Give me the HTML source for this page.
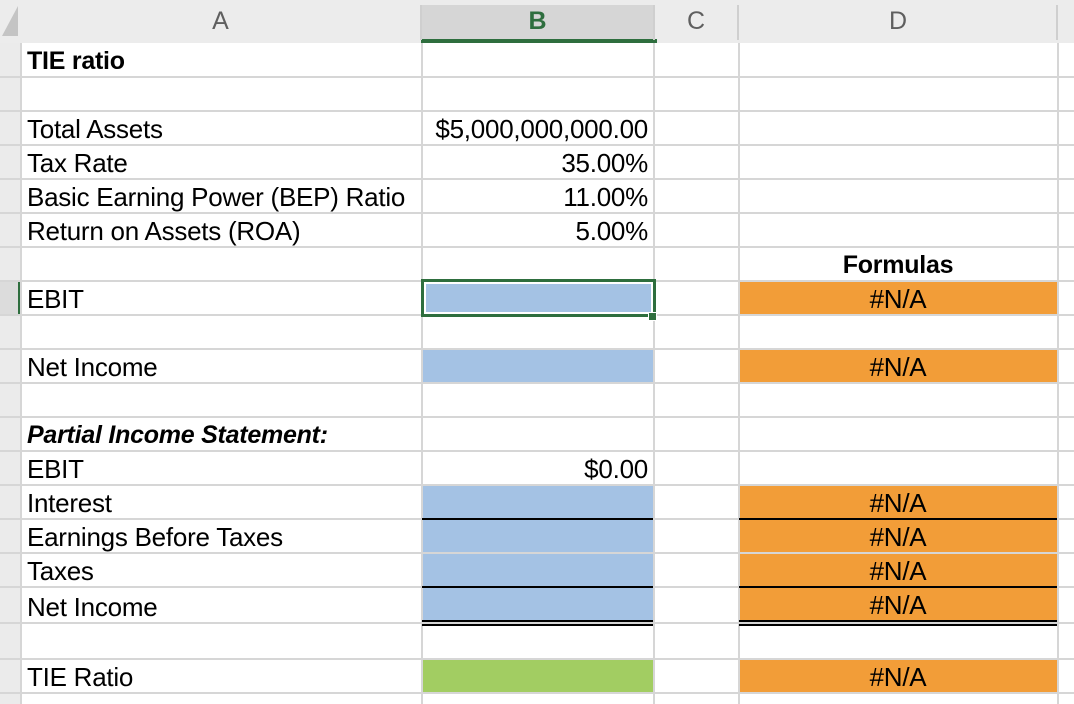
<!DOCTYPE html>
<html><head><meta charset="utf-8"><style>
*{margin:0;padding:0;box-sizing:border-box}
body{width:1074px;height:704px;overflow:hidden;background:#fff;position:relative;font-family:"Liberation Sans",Arial,sans-serif;color:#000}
.a{position:absolute}
.h{position:absolute;left:0;width:1074px;height:2px;background:#d6d6d6}
.v{position:absolute;top:43px;width:2px;height:661px;background:#d6d6d6}
.t{position:absolute;font-size:26px;letter-spacing:-0.25px;line-height:34px;white-space:nowrap}
.r{text-align:right}
.c{text-align:center}
.blue{background:#a4c2e4}
.or{background:#f29d38}
.hd{position:absolute;top:0;height:42px;font-size:25px;line-height:42px;text-align:center;color:#5f5f5f}
</style></head><body>
<div class="a" style="left:0;top:0;width:1074px;height:43px;background:#ececec"></div>
<div class="a" style="left:0;top:43px;width:20px;height:661px;background:#ebebeb"></div>
<div class="a" style="left:0;top:281px;width:20px;height:34px;background:#dcdcdc"></div>
<div class="a" style="left:18px;top:281px;width:4px;height:35px;background:#2e6e3e"></div>
<div class="a" style="left:422px;top:5px;width:231px;height:35px;background:#d6d6d6"></div>
<div class="a" style="left:421px;top:39px;width:236px;height:4px;background:#2e6e3e"></div>
<div class="hd" style="left:20px;width:401px">A</div>
<div class="hd" style="left:421px;width:233px;color:#2e6e3e;font-weight:bold">B</div>
<div class="hd" style="left:654px;width:84px">C</div>
<div class="hd" style="left:738px;width:320px">D</div>
<div class="a" style="left:420px;top:5px;width:2px;height:35px;background:#cfcfcf"></div>
<div class="a" style="left:653px;top:5px;width:2px;height:35px;background:#cfcfcf"></div>
<div class="a" style="left:737px;top:5px;width:2px;height:35px;background:#cfcfcf"></div>
<div class="a" style="left:1056px;top:5px;width:2px;height:35px;background:#cfcfcf"></div>
<div class="a" style="left:2px;top:6px;width:0;height:0;border-left:16px solid transparent;border-bottom:30px solid #c4c4c4"></div>

<div class="a blue" style="left:422px;top:349px;width:231px;height:34px"></div>
<div class="a blue" style="left:422px;top:485px;width:231px;height:136px"></div>
<div class="a" style="left:422px;top:659px;width:231px;height:34px;background:#a2cd62"></div>
<div class="a or" style="left:739px;top:281px;width:318px;height:34px"></div>
<div class="a or" style="left:739px;top:349px;width:318px;height:34px"></div>
<div class="a or" style="left:739px;top:485px;width:318px;height:136px"></div>
<div class="a or" style="left:739px;top:659px;width:318px;height:34px"></div>

<div class="h" style="top:76px"></div><div class="h" style="top:110px"></div>
<div class="h" style="top:144px"></div><div class="h" style="top:178px"></div>
<div class="h" style="top:212px"></div><div class="h" style="top:246px"></div>
<div class="h" style="top:280px"></div><div class="h" style="top:314px"></div>
<div class="h" style="top:348px"></div><div class="h" style="top:382px"></div>
<div class="h" style="top:416px"></div><div class="h" style="top:450px"></div>
<div class="h" style="top:484px"></div><div class="h" style="top:518px"></div>
<div class="h" style="top:552px"></div><div class="h" style="top:586px"></div>
<div class="h" style="top:622px"></div><div class="h" style="top:658px"></div>
<div class="h" style="top:692px"></div>
<div class="v" style="left:20px"></div><div class="v" style="left:421px"></div>
<div class="v" style="left:653px"></div><div class="v" style="left:738px"></div>
<div class="v" style="left:1057px"></div>

<div class="a" style="left:422px;top:518px;width:231px;height:2px;background:#000"></div>
<div class="a" style="left:422px;top:586px;width:231px;height:2px;background:#000"></div>
<div class="a" style="left:422px;top:620px;width:231px;height:2px;background:#000"></div>
<div class="a" style="left:422px;top:624px;width:231px;height:2px;background:#000"></div>
<div class="a" style="left:739px;top:518px;width:318px;height:2px;background:#000"></div>
<div class="a" style="left:739px;top:586px;width:318px;height:2px;background:#000"></div>
<div class="a" style="left:739px;top:620px;width:318px;height:2px;background:#000"></div>
<div class="a" style="left:739px;top:624px;width:318px;height:2px;background:#000"></div>

<div class="a" style="left:421px;top:279px;width:235px;height:38px;border:3px solid #2e6e3e;background:#fff"></div>
<div class="a blue" style="left:426px;top:284px;width:225px;height:28px"></div>
<div class="a" style="left:648px;top:312px;width:9px;height:9px;background:#2e6e3e;border:1px solid #fff"></div>

<div class="t" style="left:27px;top:44px;font-weight:bold;font-size:25px">TIE ratio</div>
<div class="t" style="left:27px;top:112px">Total Assets</div>
<div class="t" style="left:27px;top:146px">Tax Rate</div>
<div class="t" style="left:27px;top:180px">Basic Earning Power (BEP) Ratio</div>
<div class="t" style="left:27px;top:214px">Return on Assets (ROA)</div>
<div class="t" style="left:27px;top:282px">EBIT</div>
<div class="t" style="left:27px;top:350px">Net Income</div>
<div class="t" style="left:27px;top:418px;font-weight:bold;font-style:italic;font-size:25px">Partial Income Statement:</div>
<div class="t" style="left:27px;top:452px">EBIT</div>
<div class="t" style="left:27px;top:486px">Interest</div>
<div class="t" style="left:27px;top:520px">Earnings Before Taxes</div>
<div class="t" style="left:27px;top:554px">Taxes</div>
<div class="t" style="left:27px;top:590px">Net Income</div>
<div class="t" style="left:27px;top:660px">TIE Ratio</div>

<div class="t r" style="left:422px;width:226px;top:112px">$5,000,000,000.00</div>
<div class="t r" style="left:422px;width:226px;top:146px">35.00%</div>
<div class="t r" style="left:422px;width:226px;top:180px">11.00%</div>
<div class="t r" style="left:422px;width:226px;top:214px">5.00%</div>
<div class="t r" style="left:422px;width:226px;top:452px">$0.00</div>

<div class="t c" style="left:739px;width:318px;top:248px;font-weight:bold;font-size:25px">Formulas</div>
<div class="t c" style="left:739px;width:318px;top:282px">#N/A</div>
<div class="t c" style="left:739px;width:318px;top:350px">#N/A</div>
<div class="t c" style="left:739px;width:318px;top:486px">#N/A</div>
<div class="t c" style="left:739px;width:318px;top:520px">#N/A</div>
<div class="t c" style="left:739px;width:318px;top:554px">#N/A</div>
<div class="t c" style="left:739px;width:318px;top:588px">#N/A</div>
<div class="t c" style="left:739px;width:318px;top:660px">#N/A</div>
</body></html>
